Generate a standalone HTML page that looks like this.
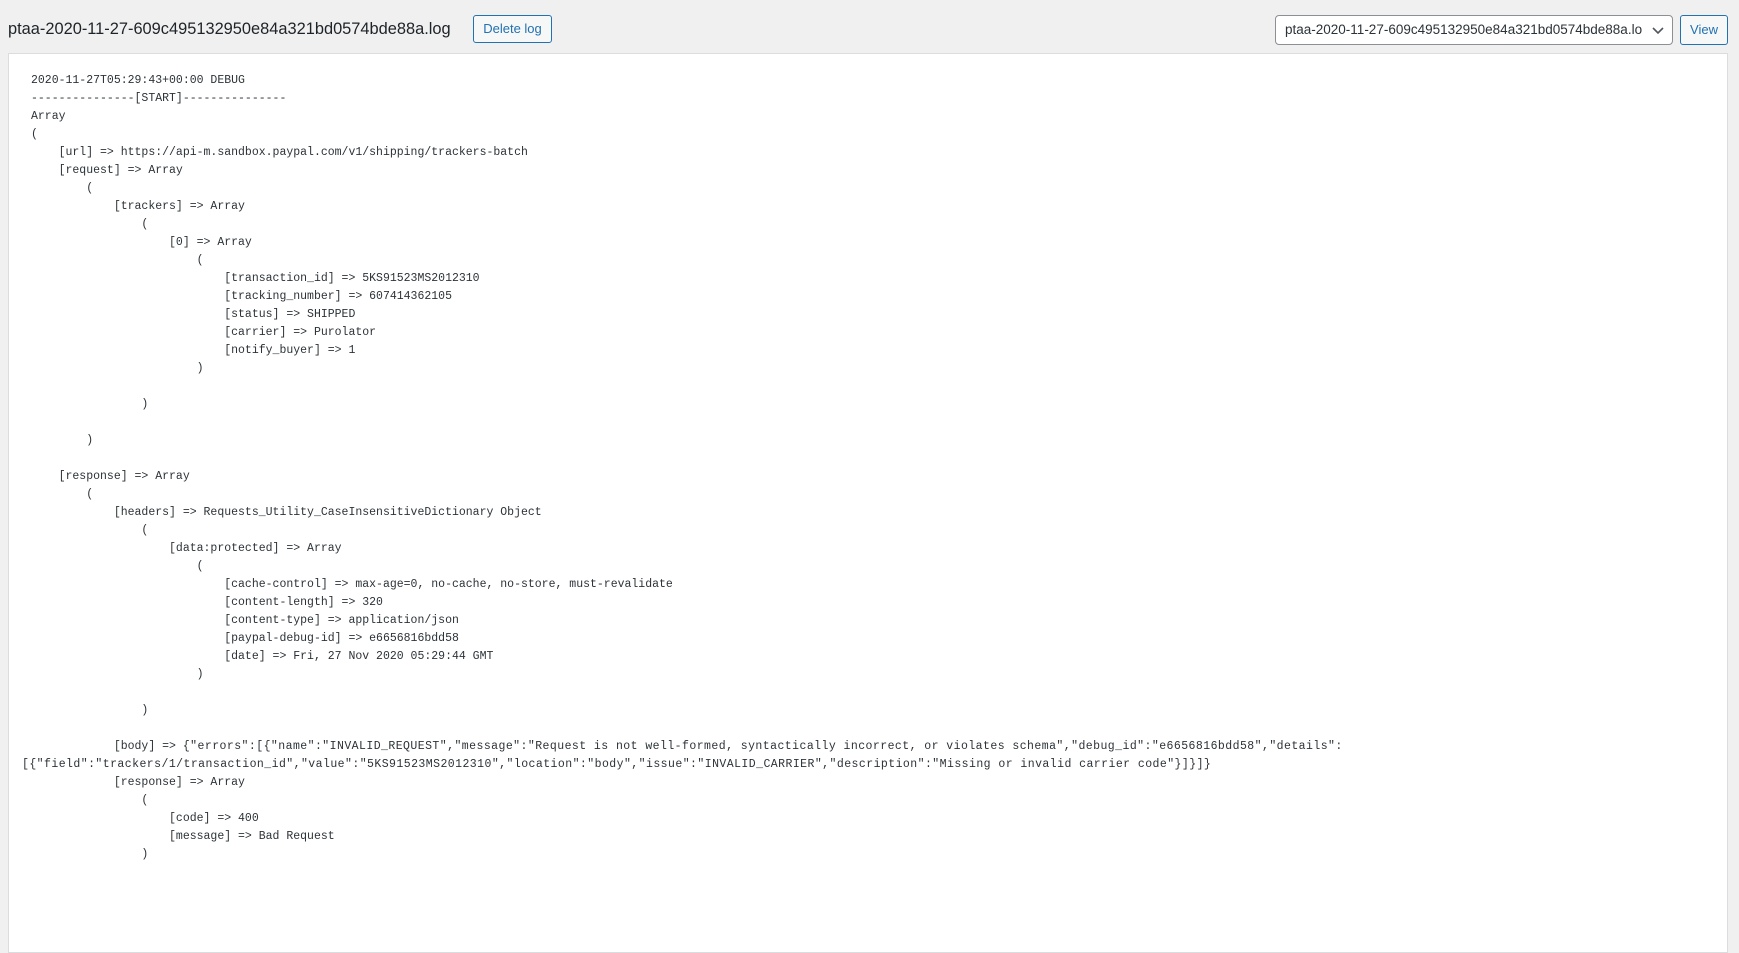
<!DOCTYPE html>
<html><head><meta charset="utf-8"><style>
html,body{margin:0;padding:0;background:#f0f0f1;width:1739px;height:875px;overflow:hidden;font-family:"Liberation Sans",sans-serif;color:#1d2327}
.title{position:absolute;left:8px;top:15px;font-size:16.4px;line-height:28px;color:#1d2327;white-space:nowrap}
.btn{position:absolute;top:15px;height:26px;border:1px solid #2271b1;border-radius:3px;background:#f6f7f7;color:#2271b1;font-size:13px;line-height:26px;text-align:center;box-sizing:content-box}
.sel{position:absolute;left:1275px;top:15px;width:398px;height:30px;border:1px solid #8c8f94;border-radius:4px;background:#fff;font-size:13.5px;line-height:28px;color:#2c3338;padding-left:9px;padding-right:30px;box-sizing:border-box;overflow:hidden;white-space:nowrap}
.sel svg{position:absolute;right:8px;top:10px}
.panel{position:absolute;left:8px;top:53px;width:1720px;height:900px;background:#fff;border:1px solid #dcdcde;box-sizing:border-box}
pre{position:absolute;left:22px;top:18px;margin:0;font-family:"Liberation Mono",monospace;font-size:11.5px;line-height:18px;color:#2c3338}
.w{letter-spacing:0.44px}
</style></head><body>
<div class="title">ptaa-2020-11-27-609c495132950e84a321bd0574bde88a.log</div>
<div class="btn" style="left:473px;width:77px">Delete log</div>
<div class="sel">ptaa-2020-11-27-609c495132950e84a321bd0574bde88a.lo<svg width="12" height="10" viewBox="0 0 12 10"><path d="M1 2l5 5 5-5" fill="none" stroke="#50575e" stroke-width="1.6"/></svg></div>
<div class="btn" style="left:1680px;width:46px;height:28px;line-height:28px">View</div>
<div class="panel"><pre>2020-11-27T05:29:43+00:00 DEBUG
---------------[START]---------------
Array
(
    [url] =&gt; https://api-m.sandbox.paypal.com/v1/shipping/trackers-batch
    [request] =&gt; Array
        (
            [trackers] =&gt; Array
                (
                    [0] =&gt; Array
                        (
                            [transaction_id] =&gt; 5KS91523MS2012310
                            [tracking_number] =&gt; 607414362105
                            [status] =&gt; SHIPPED
                            [carrier] =&gt; Purolator
                            [notify_buyer] =&gt; 1
                        )

                )

        )

    [response] =&gt; Array
        (
            [headers] =&gt; Requests_Utility_CaseInsensitiveDictionary Object
                (
                    [data:protected] =&gt; Array
                        (
                            [cache-control] =&gt; max-age=0, no-cache, no-store, must-revalidate
                            [content-length] =&gt; 320
                            [content-type] =&gt; application/json
                            [paypal-debug-id] =&gt; e6656816bdd58
                            [date] =&gt; Fri, 27 Nov 2020 05:29:44 GMT
                        )

                )

            [body] =&gt; <span class="w">{"errors":[{"name":"INVALID_REQUEST","message":"Request is not well-formed, syntactically incorrect, or violates schema","debug_id":"e6656816bdd58","details":</span>
<span class="w" style="position:relative;left:-9px">[{"field":"trackers/1/transaction_id","value":"5KS91523MS2012310","location":"body","issue":"INVALID_CARRIER","description":"Missing or invalid carrier code"}]}]}</span>
            [response] =&gt; Array
                (
                    [code] =&gt; 400
                    [message] =&gt; Bad Request
                )
</pre></div>
</body></html>
